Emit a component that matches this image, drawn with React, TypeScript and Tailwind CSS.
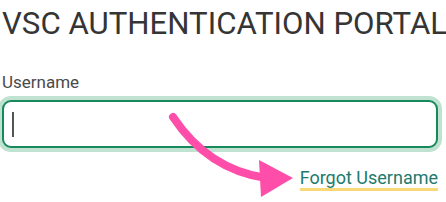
export default function App() {
  return (
    <main
      className="relative h-[202px] w-[446px] overflow-hidden bg-white"
      style={{ fontFamily: "Roboto, 'Liberation Sans', sans-serif" }}
    >
      <div className="flex flex-col pl-[2px] pr-[8px] pt-[8px]">
        {/* Title */}
        <h1 className="whitespace-nowrap text-[31.2px] leading-[31px] font-normal text-[#353535]">
          VSC AUTHENTICATION PORTAL
        </h1>

        {/* Username */}
        <label
          htmlFor="username"
          className="mt-[33px] text-[17px] leading-[20px] text-[#4a4a4a]"
        >
          Username
        </label>
        <div className="mt-[8px] flex h-[48px] items-center rounded-[9px] border-2 border-[#17895a] bg-white px-[8px] shadow-[0_0_0_4px_#bfe2d1]">
          <span className="h-[25px] w-[2px] bg-[#555]" />
          <input id="username" className="sr-only" />
        </div>

        {/* Forgot link */}
        <div className="mt-[19px] flex justify-end">
          <a
            href="#"
            className="border-b-[3px] border-[#f8d878] text-[18px] leading-[21px] text-[#227a6c]"
          >
            Forgot Username
          </a>
        </div>
      </div>

      {/* pink arrow annotation */}
      <svg
        className="pointer-events-none absolute left-0 top-0"
        width="446"
        height="202"
        viewBox="0 0 446 202"
      >
        <path
          d="M173 117 C 195 150, 225 172, 266 178"
          fill="none"
          stroke="#ff4daa"
          strokeWidth="8"
          strokeLinecap="round"
        />
        <path d="M259 160 L293 178 L261 197 Z" fill="#ff4daa" />
      </svg>
    </main>
  );
}
